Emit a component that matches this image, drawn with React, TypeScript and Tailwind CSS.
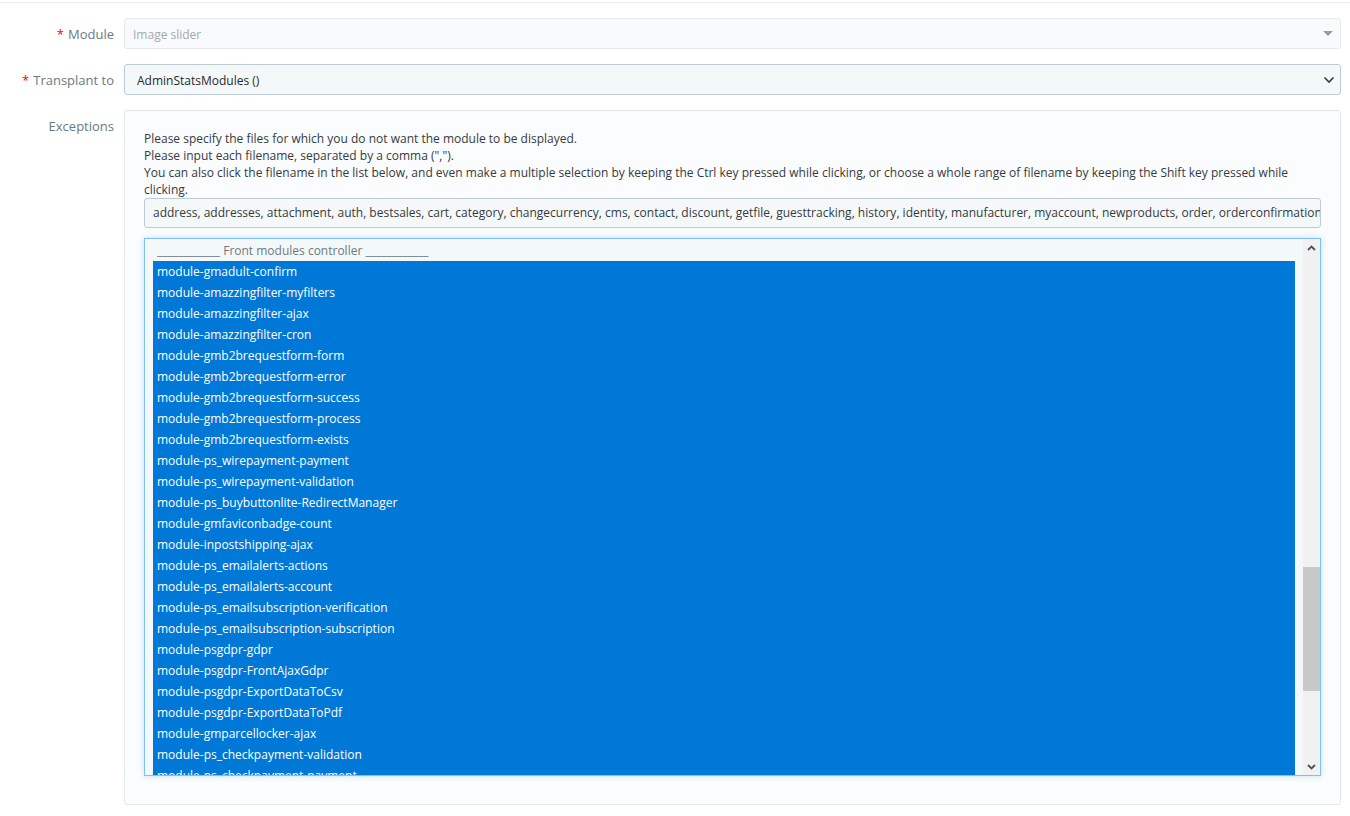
import React from "react";

const options = [
  "module-gmadult-confirm",
  "module-amazzingfilter-myfilters",
  "module-amazzingfilter-ajax",
  "module-amazzingfilter-cron",
  "module-gmb2brequestform-form",
  "module-gmb2brequestform-error",
  "module-gmb2brequestform-success",
  "module-gmb2brequestform-process",
  "module-gmb2brequestform-exists",
  "module-ps_wirepayment-payment",
  "module-ps_wirepayment-validation",
  "module-ps_buybuttonlite-RedirectManager",
  "module-gmfaviconbadge-count",
  "module-inpostshipping-ajax",
  "module-ps_emailalerts-actions",
  "module-ps_emailalerts-account",
  "module-ps_emailsubscription-verification",
  "module-ps_emailsubscription-subscription",
  "module-psgdpr-gdpr",
  "module-psgdpr-FrontAjaxGdpr",
  "module-psgdpr-ExportDataToCsv",
  "module-psgdpr-ExportDataToPdf",
  "module-gmparcellocker-ajax",
  "module-ps_checkpayment-validation",
  "module-ps_checkpayment-payment",
  "module-ps_shoppingcart-ajax",
];

const exceptionsValue =
  "address, addresses, attachment, auth, bestsales, cart, category, changecurrency, cms, contact, discount, getfile, guesttracking, history, identity, manufacturer, myaccount, newproducts, order, orderconfirmation, orderdetail, orderfollow, orderreturn, orderslip, pagenotfound, password, pdfinvoice, pdforderreturn, pdforderslip, prices-drop, product, registration, search, sitemap, stores, supplier";

function Label({ children, required }: { children: React.ReactNode; required?: boolean }) {
  return (
    <div className="w-[114px] h-[31px] shrink-0 text-right text-[13px] leading-[31px] pt-[1px] text-[#6c7a80]">
      {required && <span className="text-[#f00] mr-[4px]">*</span>}
      {children}
    </div>
  );
}

export default function App() {
  return (
    <div
      className="w-[1350px] h-[816px] overflow-hidden bg-white"
      style={{ fontFamily: '"Open Sans", "Noto Sans", sans-serif' }}
    >
      <div className="h-[2px]" />
      <div className="h-px bg-[#ebebeb]" />
      <div className="pt-[15px] pr-[9px] flex flex-col gap-[15px]">
        {/* Module */}
        <div className="flex">
          <Label required>Module</Label>
          <div className="ml-[10px] flex-1 min-w-0 h-[31px] rounded-[3px] border border-[#e4eaee] bg-[#f8fafb] flex items-center pl-[8px] pr-[6px]">
            <span className="flex-1 text-[12px] leading-[31px] pt-[2px] text-[#a3a9ad]">Image slider</span>
            <svg width="10" height="6" viewBox="0 0 10 6" className="mr-[1px]">
              <path d="M0 0 L10 0 L5 5 Z" fill="#9a9a9a" />
            </svg>
          </div>
        </div>
        {/* Transplant */}
        <div className="flex">
          <Label required>Transplant to</Label>
          <div className="ml-[10px] flex-1 min-w-0 h-[31px] rounded-[3px] border border-[#bbcdd2] bg-[#f5f8f9] flex items-center pl-[12px] pr-[4px]">
            <span className="flex-1 text-[12px] leading-[29px] pt-[1px] text-[#25292e]">AdminStatsModules ()</span>
            <svg width="12" height="8" viewBox="0 0 12 8" className="mr-[1px]">
              <path d="M1.5 1.5 L6 6 L10.5 1.5" fill="none" stroke="#363a41" strokeWidth="1.6" />
            </svg>
          </div>
        </div>
        {/* Exceptions */}
        <div className="flex">
          <div className="w-[114px] shrink-0 text-right text-[13px] leading-[31px] pt-[1px] text-[#6c7a80]">
            Exceptions
          </div>
          <div className="ml-[10px] flex-1 min-w-0 h-[695px] rounded-[3px] border border-[#e0e8ee] bg-[#fbfcfd] pt-[19px] px-[19px]">
            <div className="text-[12px] leading-[17px] text-[#363a41]">
              Please specify the files for which you do not want the module to be displayed.
              <br />
              Please input each filename, separated by a comma (",").
              <br />
              You can also click the filename in the list below, and even make a multiple selection by keeping the Ctrl key pressed while clicking, or choose a whole range of filename by keeping the Shift key pressed while clicking.
            </div>
            <div className="h-[30px] rounded-[3px] border border-[#bbcdd2] bg-[#f5f8f9] flex items-center pl-[8px] overflow-hidden">
              <span className="whitespace-nowrap text-[12px] text-[#363a41]">{exceptionsValue}</span>
            </div>
            <div className="mt-[10px] h-[538px] border border-[#7cc0f4] shadow-[0_0_6px_rgba(124,192,244,0.45)] bg-[#f5f8f9] flex overflow-hidden">
              <div className="flex-1 min-w-0 px-[8px] pt-[1px] overflow-hidden">
                <div className="h-[21px] leading-[21px] pl-[4px] text-[12px] text-[#6c7a80] whitespace-nowrap">
                  ____________ Front modules controller ____________
                </div>
                {options.map((o) => (
                  <div
                    key={o}
                    className="h-[21px] leading-[21px] pl-[4px] bg-[#0078d7] text-white text-[12px] whitespace-nowrap"
                  >
                    {o}
                  </div>
                ))}
              </div>
              <div className="w-[17px] shrink-0 bg-[#f1f1f1] flex flex-col">
                <div className="h-[17px] flex items-center justify-center">
                  <svg width="9" height="6" viewBox="0 0 9 6">
                    <path d="M1 5 L4.5 1.5 L8 5" fill="none" stroke="#505050" strokeWidth="1.8" />
                  </svg>
                </div>
                <div className="flex-1">
                  <div className="mt-[311px] h-[124px] bg-[#c8c8c8]" />
                </div>
                <div className="h-[17px] flex items-center justify-center">
                  <svg width="9" height="6" viewBox="0 0 9 6">
                    <path d="M1 1 L4.5 4.5 L8 1" fill="none" stroke="#505050" strokeWidth="1.8" />
                  </svg>
                </div>
              </div>
            </div>
          </div>
        </div>
      </div>
    </div>
  );
}
